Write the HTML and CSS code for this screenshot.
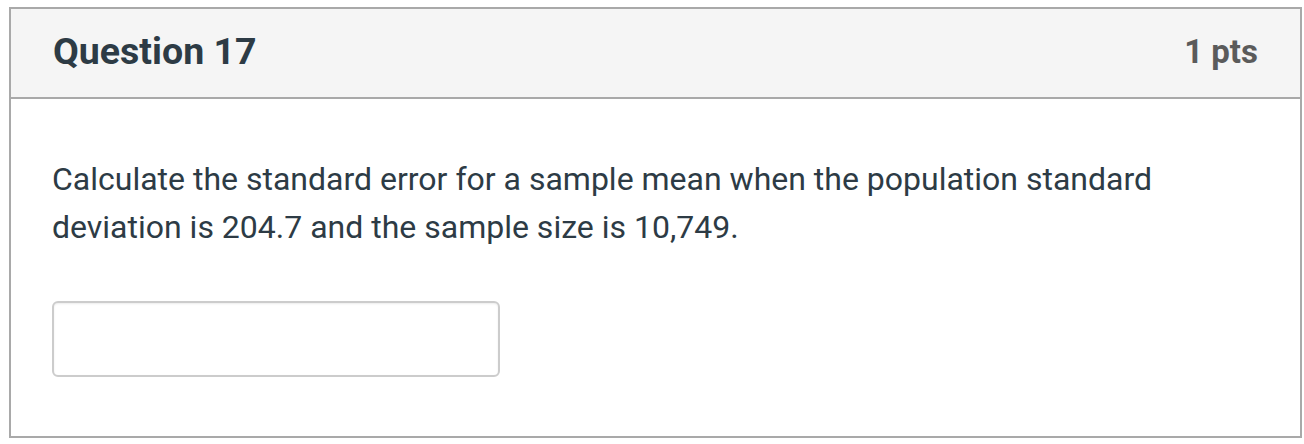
FILE: index.html
```html
<!DOCTYPE html>
<html lang="en">
<head>
<meta charset="utf-8">
<title>Question 17</title>
<link rel="stylesheet" href="styles.css">
</head>
<body>
<div class="question">
  <div class="question-header">
    <span class="question-title">Question 17</span>
    <span class="question-points">1 pts</span>
  </div>
  <div class="question-body">
    <p class="question-text">Calculate the standard error for a sample mean when the population standard deviation is 204.7 and the sample size is 10,749.</p>
    <input class="answer-input" type="text" aria-label="Answer">
  </div>
</div>
</body>
</html>
```
FILE: styles.css
```css
html, body {
  margin: 0;
  padding: 0;
  background: #ffffff;
}
body {
  font-family: Roboto, "Liberation Sans", Arial, sans-serif;
  color: #2d3b45;
}
.question {
  margin: 7px 2px 0 9px;
  border: 2px solid #a9a9a9;
  height: 427px;
  box-sizing: content-box;
  display: flex;
  flex-direction: column;
}
.question-header {
  background: #f5f5f5;
  border-bottom: 2px solid #a9a9a9;
  display: flex;
  align-items: center;
  justify-content: space-between;
  padding: 0 42px 4px 42px;
  box-sizing: border-box;
  height: 90px;
}
.question-title {
  font-size: 37.5px;
  font-weight: 700;
  color: #2d3b45;
}
.question-points {
  font-size: 33px;
  font-weight: 700;
  color: #5b5b5b;
}
.question-body {
  padding: 56px 42px 0 41px;
}
.question-text {
  margin: 0;
  font-size: 32px;
  line-height: 48px;
}
.answer-input {
  display: block;
  margin-top: 50px;
  width: 448px;
  height: 76px;
  box-sizing: border-box;
  border: 2px solid #cccccc;
  border-radius: 6px;
  background: #ffffff;
  box-shadow: inset 0 1px 2px rgba(0,0,0,0.08);
  padding: 0 12px;
  font-family: inherit;
  font-size: 28px;
  color: #2d3b45;
}
```
